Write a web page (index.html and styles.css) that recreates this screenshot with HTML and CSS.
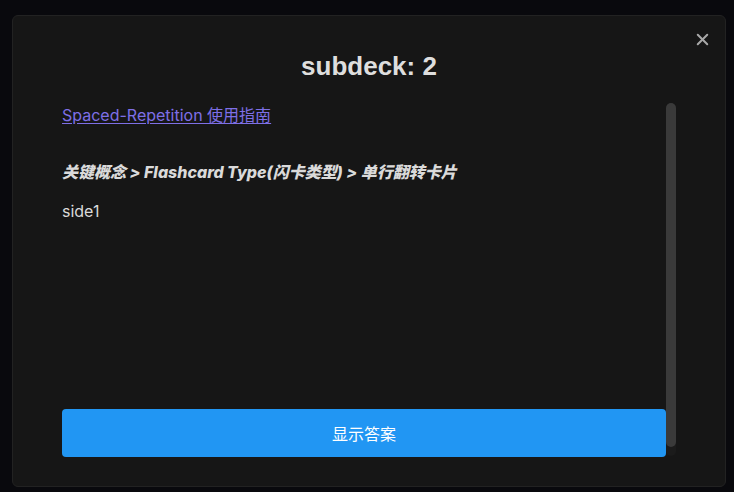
FILE: index.html
```html
<!DOCTYPE html>
<html lang="zh">
<head>
<meta charset="utf-8">
<link rel="stylesheet" href="styles.css">
</head>
<body>
<div class="modal">
  <div class="close" aria-label="Close">
    <svg width="19" height="19" viewBox="0 0 24 24" fill="none" stroke="currentColor" stroke-width="2.5" stroke-linecap="round" stroke-linejoin="round"><path d="M18 6 6 18"/><path d="m6 6 12 12"/></svg>
  </div>
  <h2 class="title">subdeck: 2</h2>
  <div class="scroll">
    <div class="content">
      <a class="guide" href="#">Spaced-Repetition 使用指南</a>
      <div class="breadcrumb">关键概念 &gt; Flashcard Type(闪卡类型) &gt; 单行翻转卡片</div>
      <div class="question">side1</div>
      <button class="show">显示答案</button>
    </div>
    <div class="scrollbar"><div class="thumb"></div></div>
  </div>
</div>
</body>
</html>
```

FILE: styles.css
```css
html, body {
  margin: 0;
  padding: 0;
  background: #09090d;
  width: 734px;
  height: 492px;
  overflow: hidden;
  font-family: Inter, "Noto Sans CJK SC", sans-serif;
}

.modal {
  position: relative;
  box-sizing: border-box;
  width: 714px;
  height: 472px;
  margin: 15px 0 0 12px;
  background: #161616;
  border: 1px solid #222;
  border-radius: 6px;
  padding: 34px 49px 0 49px;
  color: #dadada;
}

.close {
  position: absolute;
  top: 11px;
  right: 11px;
  width: 24px;
  height: 24px;
  display: flex;
  align-items: center;
  justify-content: center;
  color: #a8a8a8;
}

.title {
  margin: 0;
  font-family: "Liberation Sans", Arial, sans-serif;
  font-weight: 700;
  font-size: 26px;
  line-height: 32px;
  text-align: center;
  color: #dedede;
}

.scroll {
  margin-top: 21px;
  height: 355px;
  display: flex;
  align-items: flex-start;
  overflow: hidden;
}

.content {
  box-sizing: border-box;
  flex: 1;
  min-width: 0;
  height: 362px;
  display: flex;
  flex-direction: column;
  align-items: flex-start;
  padding-bottom: 8px;
}

.scrollbar {
  width: 10px;
  height: 353px;
  background: #1b1b1b;
  border-radius: 5px;
}

.thumb {
  height: 344px;
  background: #3a3a3a;
  border-radius: 5px;
}

.guide {
  font-size: 16px;
  line-height: 24px;
  color: #7e6fe6;
  text-decoration: underline;
  text-underline-offset: 2px;
}

.breadcrumb {
  margin-top: 33px;
  font-size: 16px;
  line-height: 24px;
  font-weight: 800;
  font-style: italic;
  color: #dadada;
}

.question {
  margin-top: 15px;
  font-size: 16px;
  line-height: 24px;
  color: #dadada;
}

.show {
  margin-top: auto;
  align-self: stretch;
  height: 48px;
  border: none;
  border-radius: 4px;
  background: #2196f3;
  color: #ffffff;
  font-family: Inter, "Noto Sans CJK SC", sans-serif;
  font-size: 16px;
}
```
